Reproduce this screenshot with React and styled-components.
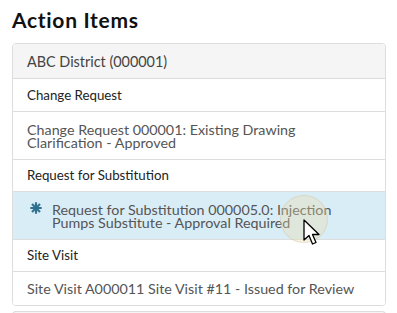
import React from 'react';
import styled, { createGlobalStyle } from 'styled-components';

const Global = createGlobalStyle`
  body {
    margin: 0;
    background: #fff;
    font-family: "Lato", "Noto Sans", sans-serif;
  }
`;

const Page = styled.div`
  padding: 6px 11px 0 12px;
  position: relative;
`;

const Title = styled.h2`
  margin: 0 0 9px;
  font-size: 21px;
  font-weight: 700;
  letter-spacing: 0.7px;
  color: #111;
  line-height: 28px;
`;

const Panel = styled.div`
  border: 1px solid #ddd;
  border-radius: 4px;
  overflow: hidden;
  margin-bottom: 5px;
`;

const Heading = styled.div`
  background: #f5f5f5;
  border-bottom: 1px solid #ddd;
  height: 34px;
  display: flex;
  align-items: center;
  padding: 0 14px;
  font-size: 14.4px;
  color: #444;
`;

const Row = styled.div`
  display: flex;
  align-items: ${p => (p.$tall ? 'flex-start' : 'center')};
  gap: 10px;
  box-sizing: border-box;
  min-height: ${p => (p.$tall ? 48 : p.$category ? 32 : 34)}px;
  padding: ${p => (p.$tall ? '11px 24px 10px 14px' : '0 24px 0 14px')};
  padding-left: ${p => (p.$active ? '17px' : '14px')};
  border-top: ${p => (p.$first ? 'none' : '1px solid #ddd')};
  background: ${p => (p.$active ? '#d9edf7' : '#fff')};
  font-size: ${p => (p.$category ? '13.3px' : '14.3px')};
  color: ${p => (p.$category ? '#222' : '#555')};
  line-height: 13px;
`;

const Star = styled.span`
  display: inline-flex;
  color: #31708f;
  flex: none;
  margin-top: -1px;
`;

const EmptyPanel = styled.div`
  border: 1px solid #ddd;
  border-bottom: none;
  border-radius: 4px 4px 0 0;
  background: #f5f5f5;
  height: 10px;
`;

const Pointer = styled.div`
  position: absolute;
  left: ${p => p.$x}px;
  top: ${p => p.$y}px;
  pointer-events: none;
`;

const Halo = styled.div`
  position: absolute;
  left: -23px;
  top: -24px;
  width: 46px;
  height: 46px;
  border-radius: 50%;
  background: rgba(235, 220, 170, 0.35);
  border: 1px solid rgba(200, 190, 160, 0.35);
`;

const Asterisk = () => (
  <svg width="12" height="12" viewBox="0 0 12 12">
    <g stroke="currentColor" strokeWidth="2.1" strokeLinecap="butt">
      <line x1="6" y1="0.3" x2="6" y2="11.7" />
      <line x1="0.3" y1="6" x2="11.7" y2="6" />
      <line x1="2" y1="2" x2="10" y2="10" />
      <line x1="2" y1="10" x2="10" y2="2" />
    </g>
  </svg>
);

const Cursor = () => (
  <svg width="20" height="28" viewBox="0 0 20 28" style={{ position: 'absolute', left: 0, top: 0 }}>
    <path
      d="M1 1 L1 21 L6 16.5 L9.5 25 L13 23.5 L9.5 15.5 L16 15.5 Z"
      fill="#fff"
      stroke="#000"
      strokeWidth="1.3"
      strokeLinejoin="round"
    />
  </svg>
);

const groups = [
  {
    name: 'Change Request',
    items: [{ text: 'Change Request 000001: Existing Drawing Clarification - Approved', tall: true }],
  },
  {
    name: 'Request for Substitution',
    items: [
      {
        text: 'Request for Substitution 000005.0: Injection Pumps Substitute - Approval Required',
        tall: true,
        active: true,
      },
    ],
  },
  {
    name: 'Site Visit',
    items: [{ text: 'Site Visit A000011 Site Visit #11 - Issued for Review' }],
  },
];

export default function App() {
  return (
    <Page>
      <Global />
      <Title>Action Items</Title>
      <Panel>
        <Heading>ABC District (000001)</Heading>
        {groups.map((g, gi) => (
          <React.Fragment key={g.name}>
            <Row $category $first={gi === 0}>{g.name}</Row>
            {g.items.map(item => (
              <Row key={item.text} $tall={item.tall} $active={item.active}>
                {item.active && (
                  <Star>
                    <Asterisk />
                  </Star>
                )}
                <span>{item.text}</span>
              </Row>
            ))}
          </React.Fragment>
        ))}
      </Panel>
      <EmptyPanel />
      <Pointer $x={303} $y={219}>
        <Halo />
        <Cursor />
      </Pointer>
    </Page>
  );
}
